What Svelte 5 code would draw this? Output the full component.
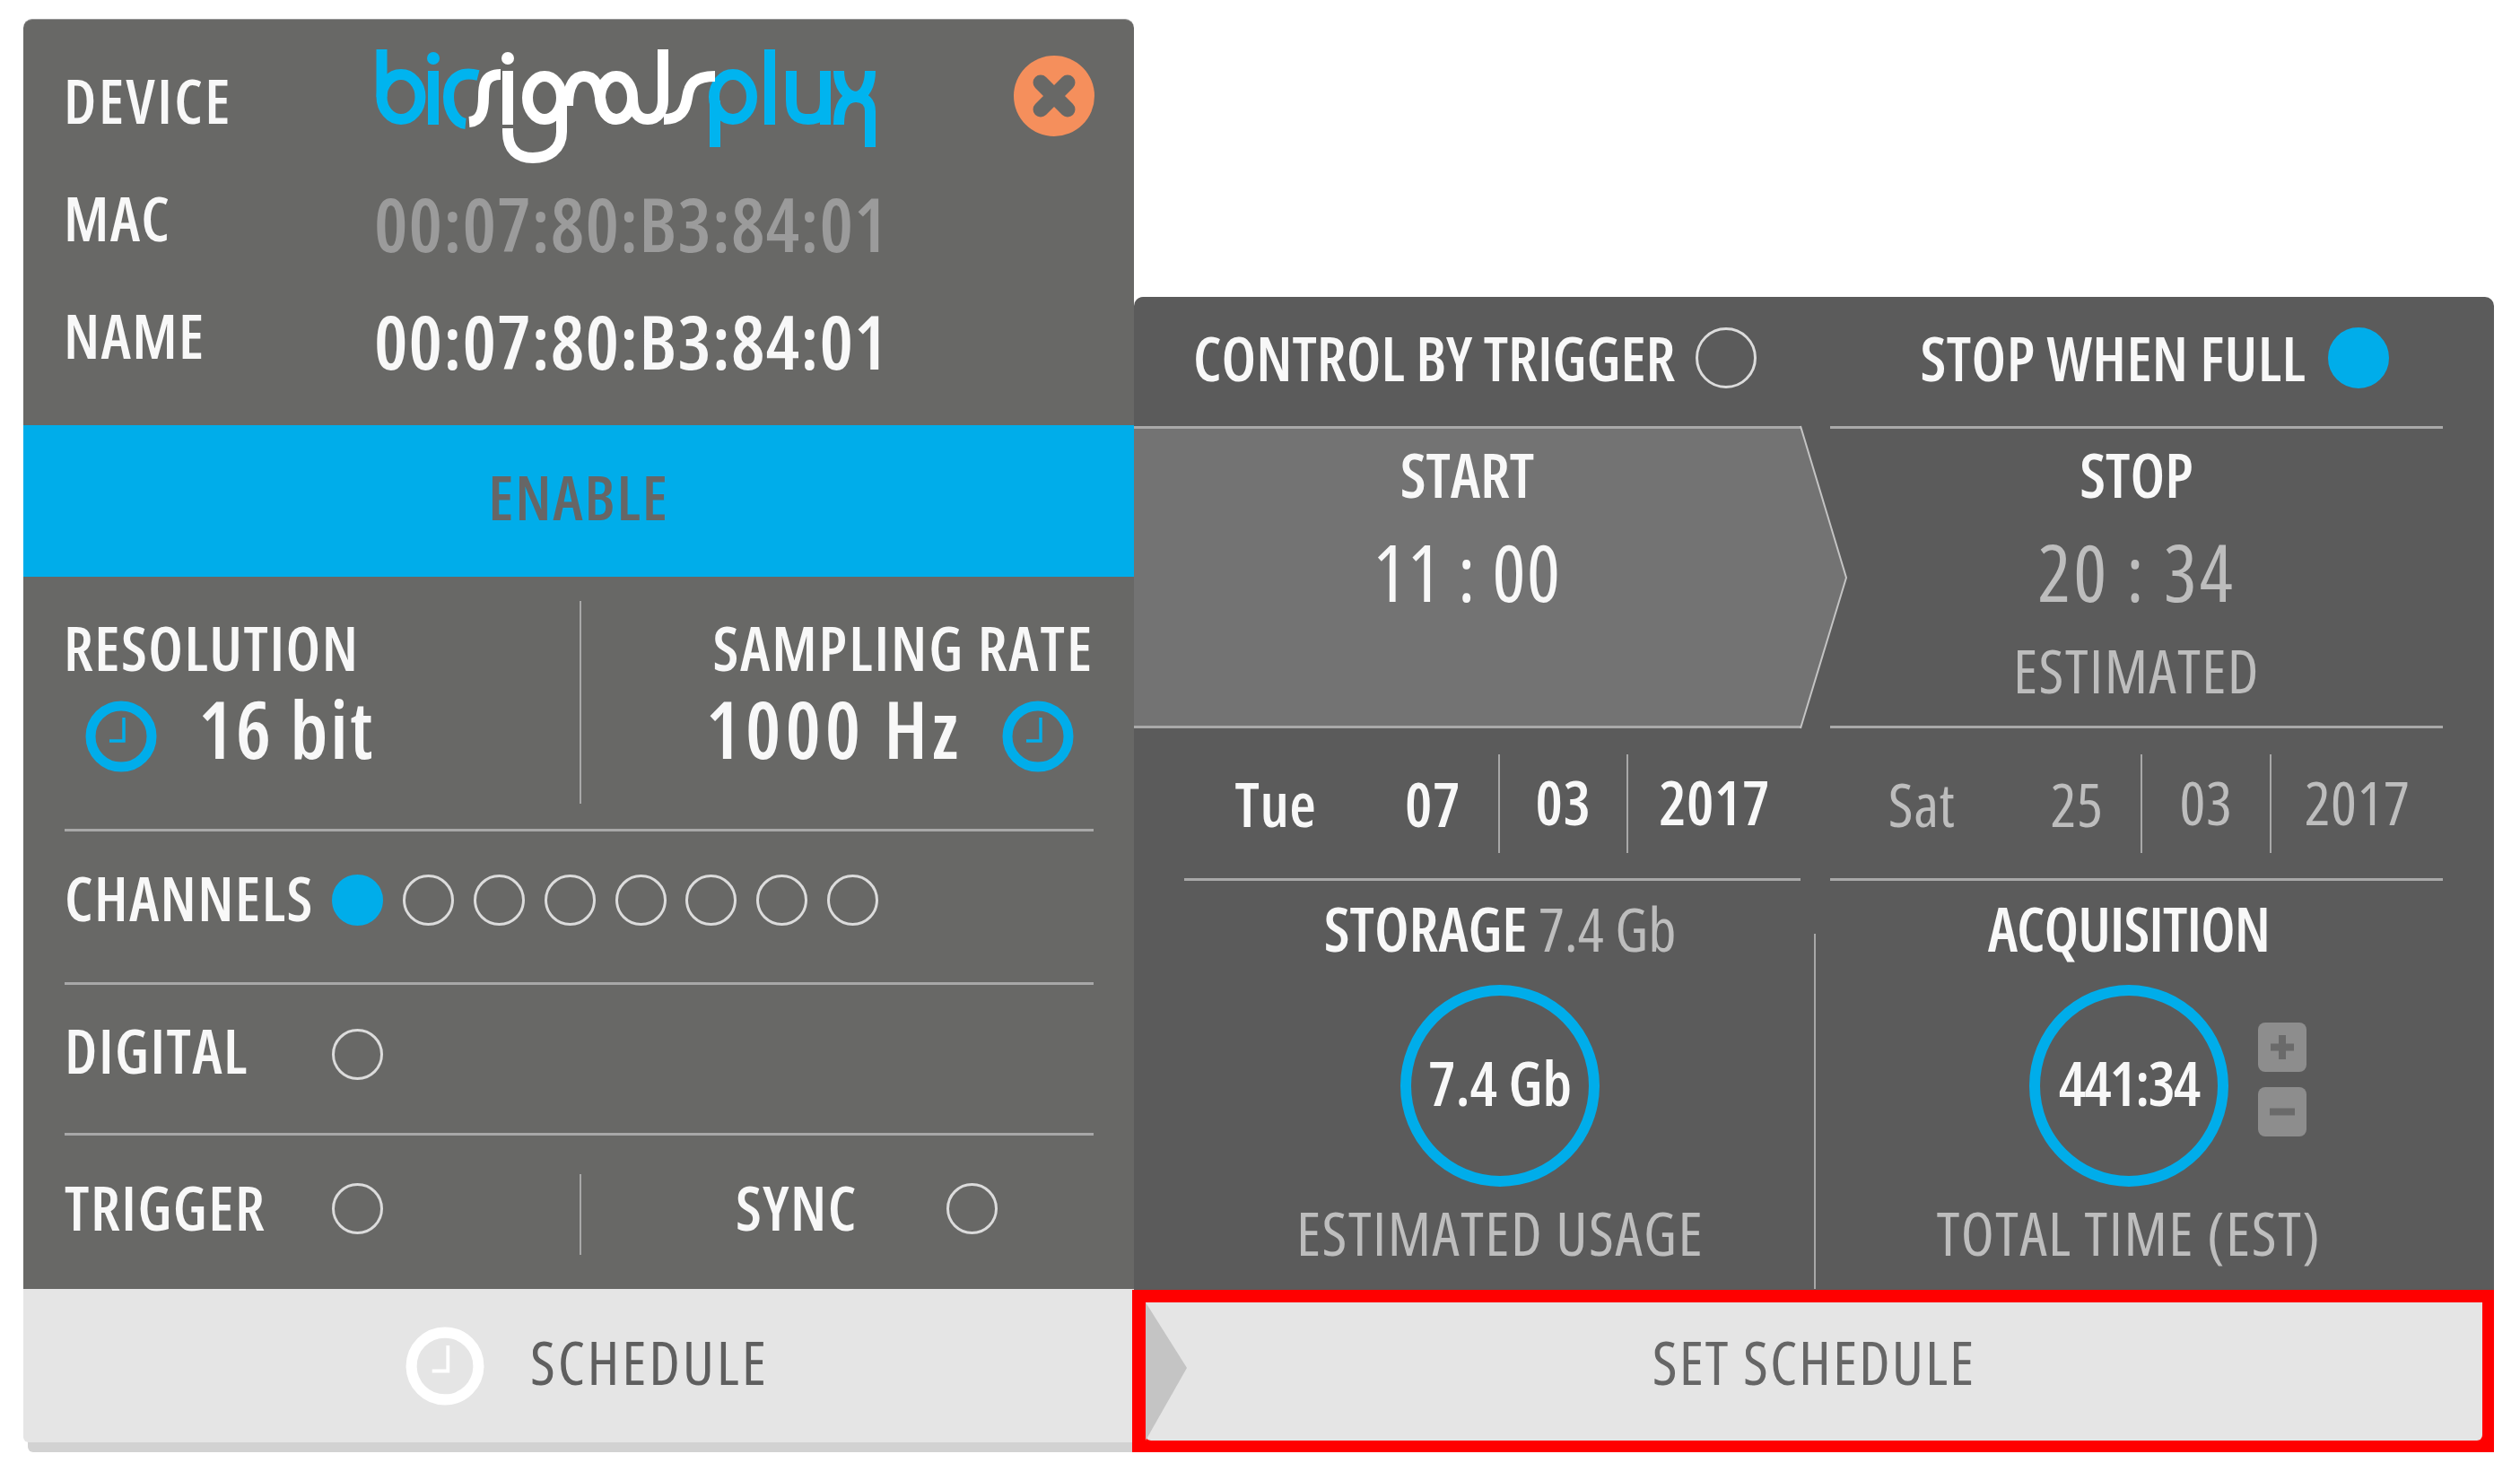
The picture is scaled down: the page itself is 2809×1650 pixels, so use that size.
<script>
  const channels = [true, false, false, false, false, false, false, false];
  const startDate = ['Tue', '07', '03', '2017'];
  const stopDate = ['Sat', '25', '03', '2017'];
</script>

{#snippet clock(cls)}
  <svg class={cls} viewBox="0 0 80 80" aria-hidden="true">
    <circle cx="40" cy="40" r="34" fill="none" stroke="currentColor" stroke-width="11" />
    <path d="M43 19V45H27" fill="none" stroke="currentColor" stroke-width="3.5" />
  </svg>
{/snippet}

<div class="app">
  <section class="left">
    <div class="head">
      <div class="hrow first">
        <span class="lab hl dv">DEVICE</span>
        <svg class="logo" viewBox="0 0 560 135" aria-label="biosignalsplux">
          <g class="blue">
            <path d="M6.5 3V56" />
            <ellipse cx="28" cy="56" rx="21.5" ry="25" />
            <path d="M64 27V87" />
            <path d="M114 32C90 26 81 40 81 56C81 72 90 85 100 86" />
            <path d="M378 60V112" />
            <ellipse cx="398" cy="56" rx="21" ry="25" />
            <path d="M439 3V87" />
            <path d="M463 27V60C463 78 472 81 482 81C492 81 501 78 501 60V27M501 60V87" />
            <path d="M516 27C516 45 525 55 535 56C520 56 516 70 516 87M551 27C551 42 545 55 535 56C545 56 551 62 551 72V112" />
          </g>
          <g class="white">
            <path d="M139 31C120 31 120 45 120 56C120 70 118 83 104 84" />
            <path d="M147 27V87" />
            <ellipse cx="188" cy="57" rx="19" ry="24" />
            <path d="M207 50V95C207 115 192 124 175 124C158 124 147 115 147 95V91" />
            <path d="M214 66C214 42 222 33 232 33C245 33 248 45 250 57C252 72 258 81 268 81" />
            <ellipse cx="268" cy="57" rx="18" ry="24" />
            <path d="M286 57C286 72 292 81 303 81C314 81 320 72 320 60V3" />
            <path d="M321 81C340 81 345 70 347 57C349 42 355 33 378 33" />
          </g>
          <circle class="bdot" cx="64" cy="13" r="7" />
          <circle class="wdot" cx="147" cy="13" r="7" />
        </svg>
        <span class="close" aria-label="Close">
          <svg viewBox="0 0 90 90"><circle cx="45" cy="45" r="45" fill="#f58f5c" /><path d="M30 30L60 60M60 30L30 60" stroke="#686866" stroke-width="17" stroke-linecap="round" /></svg>
        </span>
      </div>
      <div class="hrow">
        <span class="lab hl">MAC</span>
        <span class="val dim">00:07:80:B3:84:01</span>
      </div>
      <div class="hrow">
        <span class="lab hl">NAME</span>
        <span class="val">00:07:80:B3:84:01</span>
      </div>
    </div>

    <div class="enable">ENABLE</div>

    <div class="body">
      <div class="res">
        <div class="rescol lft">
          <span class="lab resl">RESOLUTION</span>
          <div class="resval">
            {@render clock('rclock')}
            <span class="big bit">16 bit</span>
          </div>
        </div>
        <i class="vline vres"></i>
        <div class="rescol rgt">
          <span class="lab samp">SAMPLING RATE</span>
          <div class="resval rv2">
            <span class="big hz">1000 Hz</span>
            {@render clock('rclock')}
          </div>
        </div>
      </div>

      <div class="opt ch">
        <span class="lab optl up4">CHANNELS</span>
        <div class="dots">
          {#each channels as on}
            <span class="dot" class:on></span>
          {/each}
        </div>
      </div>

      <div class="opt dig">
        <span class="lab optl up4">DIGITAL</span>
        <span class="dot"></span>
      </div>

      <div class="trig">
        <div class="tcol t1">
          <span class="lab optl up2">TRIGGER</span>
          <span class="dot"></span>
        </div>
        <i class="vline vtrig"></i>
        <div class="tcol sync">
          <span class="lab synl up2">SYNC</span>
          <span class="dot"></span>
        </div>
      </div>
    </div>

    <div class="schedule">
      {@render clock('wclock')}
      <span class="sched">SCHEDULE</span>
    </div>
  </section>

  <section class="right">
    <div class="ctl">
      <div class="ctlgroup g1">
        <span class="lab cbt">CONTROL BY TRIGGER</span>
        <span class="dot large"></span>
      </div>
      <div class="ctlgroup g2">
        <span class="lab swf">STOP WHEN FULL</span>
        <span class="dot large on"></span>
      </div>
    </div>

    <div class="times">
      <div class="start">
        <svg class="arrow" viewBox="0 0 794 337" aria-hidden="true">
          <polygon points="0,0 743,0 794,169 743,337 0,337" fill="#737373" />
          <path d="M0 1.5H743M0 335.5H743" stroke="#a9a9a9" stroke-width="3" fill="none" />
          <path d="M743 0L794 169L743 337" stroke="#c4c4c4" stroke-width="2" fill="none" />
        </svg>
        <span class="lab tl stl">START</span>
        <span class="time">11 : 00</span>
      </div>
      <div class="stop">
        <span class="lab tl spl">STOP</span>
        <span class="time grey t2">20 : 34</span>
        <span class="lab grey est">ESTIMATED</span>
      </div>
    </div>

    <div class="dates">
      <div class="date dl">
        {#each startDate as d, i}
          <span class="dcell" class:sep={i > 1}>{d}</span>
        {/each}
      </div>
      <div class="date dr grey">
        {#each stopDate as d, i}
          <span class="dcell" class:sep={i > 1}>{d}</span>
        {/each}
      </div>
    </div>

    <div class="usage">
      <div class="ucol c1">
        <div class="lab utitle sto">STORAGE <span class="grey gb">7.4 Gb</span></div>
        <div class="ring"><span class="rt">7.4 Gb</span></div>
        <div class="lab grey ufoot eu">ESTIMATED USAGE</div>
      </div>
      <i class="vline vuse"></i>
      <div class="ucol c2">
        <div class="lab utitle acq">ACQUISITION</div>
        <div class="ring">
          <span class="rt tight">441:34</span>
          <span class="pm plus"><svg viewBox="0 0 54 55"><path d="M27 14V41M14 27.5H40" stroke="#6a6a6a" stroke-width="8" /></svg></span>
          <span class="pm minus"><svg viewBox="0 0 54 55"><path d="M13 27.5H41" stroke="#6a6a6a" stroke-width="8" /></svg></span>
        </div>
        <div class="lab grey ufoot tt">TOTAL TIME (EST)</div>
      </div>
    </div>

    <div class="setbar">
      <div class="setin">
        <svg class="notch" viewBox="0 0 46 154" aria-hidden="true"><polygon points="0,0 46,73 0,154" fill="#c4c4c4" /></svg>
        <span class="setl">SET SCHEDULE</span>
      </div>
    </div>
  </section>
</div>

<style>
  :global(body) { margin: 0; background: #fff; }
  .app {
    display: flex;
    align-items: flex-start;
    width: 2809px;
    height: 1650px;
    box-sizing: border-box;
    padding: 21px 0 0 26px;
    font-family: "Open Sans", sans-serif;
    font-stretch: 75%;
    color: #f8f8f8;
    overflow: hidden;
  }
  .lab { font-size: 68px; line-height: 68px; font-weight: 600; letter-spacing: 1.5px; white-space: nowrap; }
  .grey { color: #bdbdbd; font-weight: 400; }
  .up4 { margin-top: -8px; }
  .up2 { margin-top: -4px; }

  .left { width: 1238px; flex: none; }
  .head {
    height: 453px;
    box-sizing: border-box;
    background: #686866;
    border-radius: 10px 10px 0 0;
    padding: 24px 44px 0 45px;
    border-top: 1px solid #9a9a9a;
  }
  .hrow { display: flex; align-items: center; height: 131px; position: relative; }
  .hl { width: 346px; flex: none; }
  .dv { letter-spacing: 2.5px; }
  .logo { width: 560px; height: 135px; flex: none; margin-top: 15px; overflow: visible; margin-left: 2px; }
  .logo g { fill: none; stroke-width: 12; }
  .blue { stroke: #00b4ef; }
  .white { stroke: #fff; }
  .bdot { fill: #00b4ef; }
  .wdot { fill: #fff; }
  .close { width: 90px; height: 90px; margin-left: auto; display: block; margin-top: -10px; }
  .close svg { display: block; width: 90px; height: 90px; }
  .val { font-size: 84px; line-height: 84px; font-weight: 600; letter-spacing: 1px; margin-top: 12px; white-space: nowrap; }
  .val.dim { color: #9b9b9b; }

  .enable {
    height: 169px;
    background: #00adea;
    color: #666;
    font-size: 68px;
    font-weight: 600;
    letter-spacing: 2px;
    display: flex;
    align-items: center;
    justify-content: center;
    padding-bottom: 10px;
    box-sizing: border-box;
  }

  .body {
    height: 794px;
    background: #686866;
    padding: 0 45px 0 46px;
    box-sizing: border-box;
  }
  .vline { display: block; width: 2px; background: #a8a8a8; flex: none; }
  .res {
    height: 284px;
    display: flex;
    box-sizing: border-box;
    border-bottom: 3px solid #a8a8a8;
  }
  .rescol { display: flex; flex-direction: column; padding-top: 45px; }
  .lft { flex: 0 0 574px; align-items: flex-start; }
  .resl { margin-left: -1px; }
  .rgt { flex: 1; align-items: flex-end; }
  .samp { letter-spacing: 2px; }
  .vres { height: 226px; margin-top: 27px; }
  .resval { display: flex; align-items: center; margin-top: 6px; }
  .big { font-size: 88px; line-height: 88px; font-weight: 600; letter-spacing: 2.5px; white-space: nowrap; }
  .hz { letter-spacing: 5px; }
  :global(.rclock) { width: 80px; height: 82px; color: #00adea; flex: none; margin-top: 18px; }
  .resval :global(.rclock) { margin-left: 23px; }
  .bit { margin-left: 46px; }
  .rv2 :global(.rclock) { margin-left: 44px; margin-right: 22px; }

  .opt { display: flex; align-items: center; box-sizing: border-box; border-bottom: 3px solid #a8a8a8; }
  .ch { height: 171px; padding-bottom: 12px; }
  .dig { height: 168px; padding-bottom: 11px; }
  .optl { width: 298px; flex: none; }
  .dots { display: flex; gap: 21.9px; margin-top: -3px; }
  .dot { display: block; width: 57px; height: 57px; box-sizing: border-box; border-radius: 50%; border: 3px solid #dcdcdc; flex: none; }
  .dot.on { background: #00adea; border-color: #00adea; }
  .dot.large { width: 68px; height: 68px; }

  .trig { height: 171px; display: flex; }
  .tcol { display: flex; align-items: center; padding-bottom: 8px; }
  .t1 { width: 574px; flex: none; }
  .vtrig { height: 90px; margin-top: 43px; }
  .sync { flex: 1; padding-left: 172px; }
  .synl { width: 235px; flex: none; }

  .schedule {
    height: 171px;
    background: #e5e5e5;
    box-shadow: 5px 11px 0 #d2d2d2;
    border-radius: 0 0 0 6px;
    display: flex;
    align-items: center;
    padding-left: 426px;
  }
  :global(.wclock) { width: 88px; height: 92px; color: #fff; flex: none; }
  .sched { font-size: 68px; font-weight: 500; letter-spacing: 2.8px; color: #5f5f5f; margin-left: 51px; margin-top: -11px; }

  .right { width: 1516px; flex: none; margin-top: 310px; position: relative; }
  .ctl {
    height: 144px;
    background: #5b5b5b;
    border-radius: 10px 10px 0 0;
    display: flex;
    align-items: center;
    padding-bottom: 8px;
    box-sizing: border-box;
  }
  .ctlgroup { display: flex; align-items: center; }
  .g1 { margin-left: 66px; gap: 23px; }
  .g2 { margin-left: 182px; gap: 25px; }
  .cbt { letter-spacing: 0; }
  .swf { letter-spacing: 0.4px; }

  .times { height: 337px; background: #5b5b5b; display: flex; }
  .start { width: 743px; flex: none; position: relative; display: flex; flex-direction: column; align-items: center; }
  .arrow { position: absolute; left: 0; top: 0; width: 794px; height: 337px; overflow: visible; }
  .start > span { position: relative; }
  .tl { margin-top: 20px; letter-spacing: 0; }
  .time { font-size: 87px; line-height: 87px; font-weight: 500; letter-spacing: 1.5px; margin-top: 31px; white-space: nowrap; }
  .stop {
    width: 683px;
    margin-left: 33px;
    box-sizing: border-box;
    border-top: 3px solid #a9a9a9;
    border-bottom: 3px solid #a9a9a9;
    display: flex;
    flex-direction: column;
    align-items: center;
  }
  .stop .tl { margin-top: 17px; }
  .t2 { font-weight: 400; letter-spacing: 3px; }
  .est { margin-top: 32px; font-weight: 400; }

  .dates { height: 170px; background: #5b5b5b; display: flex; }
  .date {
    display: grid;
    box-sizing: border-box;
    height: 170px;
    align-items: center;
    border-bottom: 3px solid #a9a9a9;
    font-size: 68px;
    font-weight: 600;
    letter-spacing: 0.5px;
  }
  .dl { margin-left: 56px; width: 687px; grid-template-columns: 204px 146px 143px 194px; }
  .dr { margin-left: 33px; width: 683px; grid-template-columns: 204px 142px 144px 193px; font-weight: 400; }
  .dcell { text-align: center; }
  .dcell.sep {
    height: 110px;
    line-height: 106px;
    border-left: 2px solid #a8a8a8;
    box-sizing: border-box;
  }

  .usage { height: 456px; background: #5b5b5b; display: flex; }
  .ucol { display: flex; flex-direction: column; align-items: center; padding-top: 19px; box-sizing: border-box; flex: none; }
  .c1 { width: 700px; margin-left: 58px; }
  .c2 { width: 698px; }
  .vuse { height: 396px; margin-top: 59px; }
  .utitle { letter-spacing: 0; }
  .acq { letter-spacing: -1px; }
  .ring {
    width: 222px;
    height: 225px;
    box-sizing: border-box;
    margin-top: 29px;
    border: 12px solid #00adea;
    border-radius: 50%;
    display: flex;
    align-items: center;
    justify-content: center;
    font-size: 68px;
    font-weight: 600;
    position: relative;
    white-space: nowrap;
  }
  .rt { margin-top: -8px; }
  .tight { letter-spacing: -2px; }
  .ufoot { margin-top: 17px; font-weight: 400; letter-spacing: 1.5px; }
  .gb { font-weight: 400; }
  .pm { position: absolute; left: 243px; width: 54px; height: 55px; border-radius: 8px; background: #8d8d8d; display: block; }
  .pm svg { display: block; width: 54px; height: 55px; }
  .plus { top: 30px; }
  .minus { top: 102px; }

  .setbar {
    height: 181px;
    margin-left: -2px;
    box-sizing: border-box;
    border: solid #ff0000;
    border-width: 14px 13px 13px 15px;
    background: #ff0000;
  }
  .setin {
    height: 100%;
    background: #e5e5e5;
    border-radius: 0 0 6px 6px;
    display: flex;
    align-items: center;
    justify-content: center;
    position: relative;
  }
  .notch { position: absolute; left: 0; top: 0; width: 46px; height: 154px; }
  .setl { font-size: 68px; font-weight: 500; letter-spacing: 2px; color: #666; margin-top: -24px; }
</style>
